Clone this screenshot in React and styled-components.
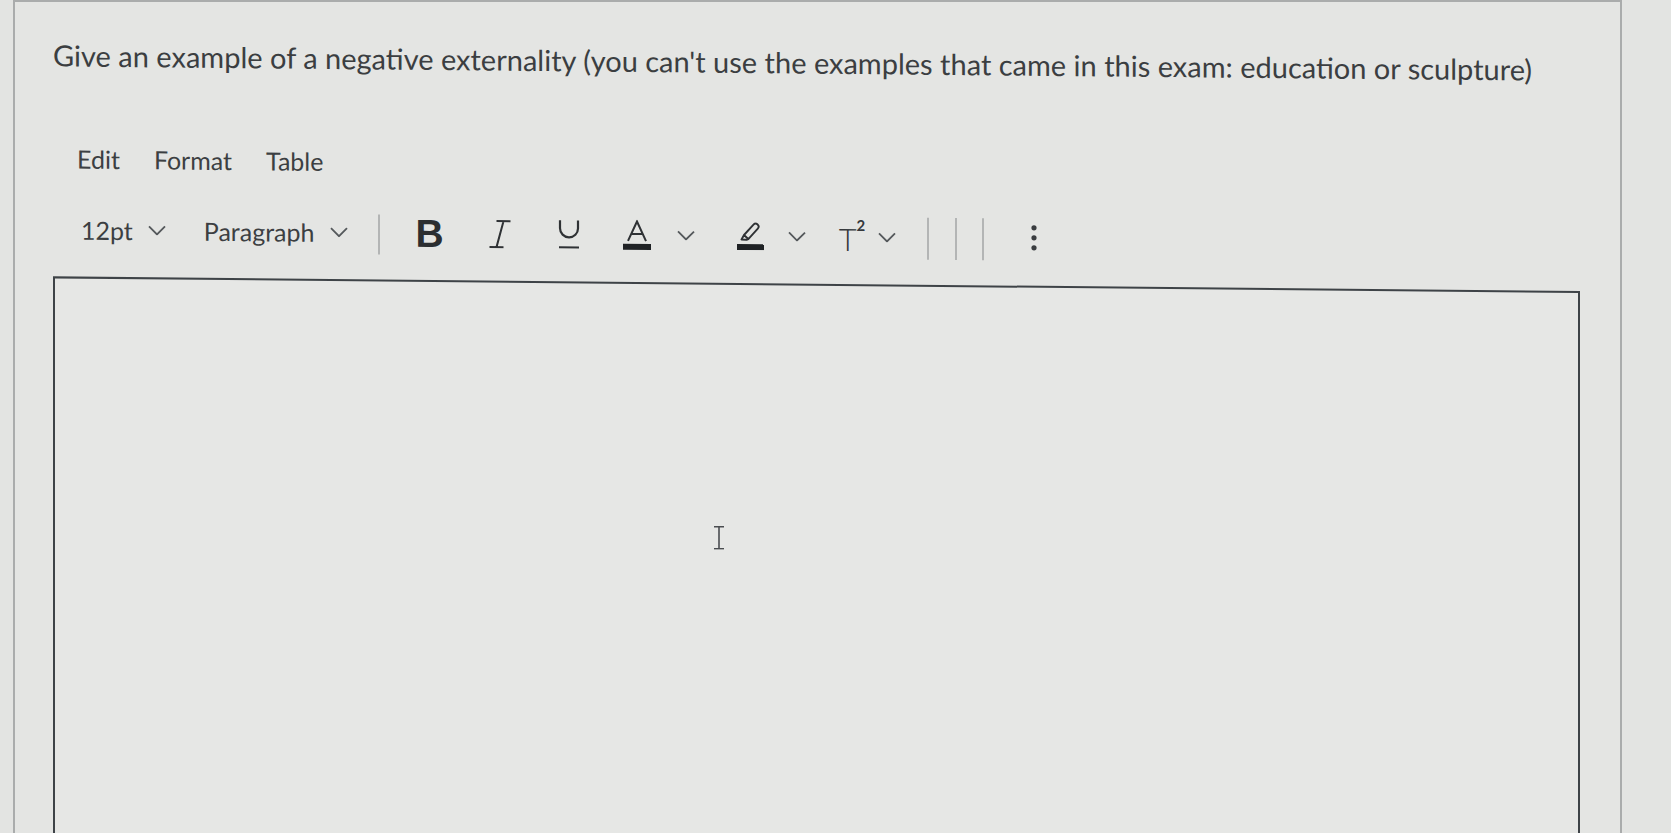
import React from "react";
import styled, { createGlobalStyle } from "styled-components";

const Global = createGlobalStyle`
  html, body { margin: 0; padding: 0; background: #e3e4e2; }
  body { font-family: "Lato", "Noto Sans", sans-serif; color: #3a3d40; overflow: hidden; }
  * { box-sizing: border-box; }
`;

const Frame = styled.div`
  margin-left: 13px;
  width: 1609px;
  height: 833px;
  border: 2px solid #aaacac;
  border-bottom: none;
  background: #e4e5e3;
`;

/* the photographed screen is very slightly tilted */
const Content = styled.div`
  padding-left: 38px;
  transform: skewY(0.55deg);
  transform-origin: 0 0;
`;

const Question = styled.p`
  margin: 33px 0 0 0;
  font-size: 29px;
  line-height: 40px;
  font-weight: 400;
  color: #3b3e41;
  white-space: nowrap;
`;

const MenuBar = styled.nav`
  display: flex;
  gap: 34px;
  margin-top: 68px;
  padding-left: 24px;
  height: 30px;
`;

const MenuItem = styled.span`
  font-size: 25px;
  line-height: 30px;
  color: #3c3f42;
`;

const Toolbar = styled.div`
  display: flex;
  align-items: center;
  height: 50px;
  margin-top: 31px;
  padding-left: 28px;
`;

const Label = styled.span`
  margin-left: ${(p) => p.$ml || 0}px;
  font-size: 25px;
  line-height: 25px;
  color: #3c3f42;
`;

const Slot = styled.span`
  display: flex;
  align-items: center;
  justify-content: center;
  margin-left: ${(p) => p.$ml || 0}px;
  margin-top: ${(p) => p.$mt || 0}px;
`;

const Divider = styled.span`
  width: 2px;
  height: ${(p) => p.$h || 42}px;
  margin-left: ${(p) => p.$ml || 0}px;
  margin-top: ${(p) => p.$mt || 2}px;
  background: #b3b5b5;
`;

const BoldGlyph = styled.span`
  margin-left: ${(p) => p.$ml || 0}px;
  font-family: "Liberation Sans", Arial, sans-serif;
  font-weight: 700;
  font-size: 39px;
  line-height: 39px;
  color: #2b2e31;
`;

const SupGlyph = styled.span`
  margin-left: ${(p) => p.$ml || 0}px;
  margin-top: 4px;
  display: flex;
  align-items: flex-start;
  color: #35383b;
`;

const SupBase = styled.span`
  font-weight: 300;
  font-size: 31px;
  line-height: 31px;
`;

const SupIndex = styled.span`
  font-weight: 700;
  font-size: 15px;
  line-height: 15px;
  margin-top: -6px;
  margin-left: 0;
`;

const EditorBox = styled.div`
  position: relative;
  margin-top: 22px;
  width: 1527px;
  height: 600px;
  border: 2px solid #3e4347;
  background: #e6e7e5;
`;

const Cursor = styled.svg`
  position: absolute;
  left: 658px;
  top: 241px;
`;

const Chevron = ({ ml }) => (
  <Slot $ml={ml}>
    <svg width="18" height="10" viewBox="0 0 18 10">
      <path d="M1 1 L9 9 L17 1" fill="none" stroke="#55595c" strokeWidth="1.8" />
    </svg>
  </Slot>
);

export default function App() {
  return (
    <>
      <Global />
      <Frame>
        <Content>
          <Question>
            Give an example of a negative externality (you can't use the examples that came in this exam: education or sculpture)
          </Question>
          <MenuBar>
            <MenuItem>Edit</MenuItem>
            <MenuItem>Format</MenuItem>
            <MenuItem>Table</MenuItem>
          </MenuBar>
          <Toolbar>
            <Label>12pt</Label>
            <Chevron ml={15} />
            <Label $ml={38}>Paragraph</Label>
            <Chevron ml={16} />
            <Divider $ml={30} $h={40} $mt={4} />
            <BoldGlyph $ml={35}>B</BoldGlyph>
            <Slot $ml={45}>
              <svg width="22" height="29" viewBox="0 0 22 29">
                <path d="M14.5 1.5 L7.5 27.5 M7.5 1.5 H21.5 M0.5 27.5 H14.5" fill="none" stroke="#2f3235" strokeWidth="2" />
              </svg>
            </Slot>
            <Slot $ml={46}>
              <svg width="24" height="30" viewBox="0 0 24 30">
                <path d="M3 1 V9 A9 9 0 0 0 21 9 V1" fill="none" stroke="#2f3235" strokeWidth="2.2" />
                <path d="M2 28 H22" stroke="#2f3235" strokeWidth="2" />
              </svg>
            </Slot>
            <Slot $ml={42}>
              <svg width="28" height="31" viewBox="0 0 28 31">
                <path d="M5 21 L14 1.5 L23 21 M8.2 14 H19.8" fill="none" stroke="#2f3235" strokeWidth="2" />
                <rect x="0" y="24" width="28" height="6" fill="#1f2225" />
              </svg>
            </Slot>
            <Chevron ml={26} />
            <Slot $ml={42}>
              <svg width="27" height="28" viewBox="0 0 27 28">
                <path
                  d="M7 13 L16.5 2.5 A2.8 2.8 0 0 1 20.8 6.4 L11.3 17 Z M7 13 L4.5 17.5 L9.5 17.8 L11.3 17"
                  fill="none"
                  stroke="#2f3235"
                  strokeWidth="1.9"
                  strokeLinejoin="round"
                />
                <rect x="0" y="22" width="27" height="6" fill="#1f2225" />
              </svg>
            </Slot>
            <Chevron ml={24} />
            <SupGlyph $ml={33}>
              <SupBase>T</SupBase>
              <SupIndex>2</SupIndex>
            </SupGlyph>
            <Chevron ml={13} />
            <Divider $ml={31} />
            <Divider $ml={26} />
            <Divider $ml={25} />
            <Slot $ml={47}>
              <svg width="6" height="28" viewBox="0 0 6 28">
                <circle cx="3" cy="3" r="2.6" fill="#3a3d40" />
                <circle cx="3" cy="13" r="2.6" fill="#3a3d40" />
                <circle cx="3" cy="23" r="2.6" fill="#3a3d40" />
              </svg>
            </Slot>
          </Toolbar>
          <EditorBox>
            <Cursor width="12" height="24" viewBox="0 0 12 24">
              <path d="M1 1 H11 M6 1 V23 M1 23 H11" fill="none" stroke="#4a4d50" strokeWidth="1.6" />
            </Cursor>
          </EditorBox>
        </Content>
      </Frame>
    </>
  );
}
